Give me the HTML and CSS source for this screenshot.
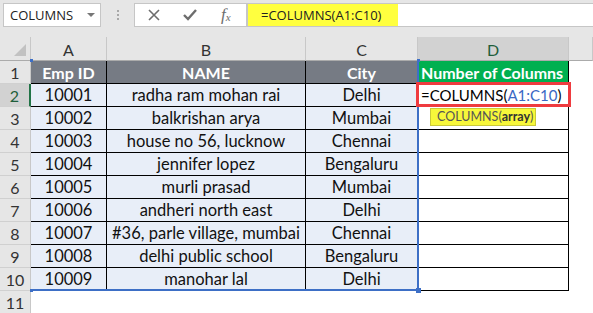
FILE: index.html
```html
<!DOCTYPE html>
<html lang="en">
<head>
    <meta charset="UTF-8">
    <title>COLUMNS function</title>
    <link rel="stylesheet" href="styles.css">
</head>
<body>

    <div class="toolbar">
        <div class="namebox">
            <span>COLUMNS</span>
            <span class="caret"></span>
        </div>
        <div class="dots"><i></i><i></i><i></i></div>
        <div class="fxbox">
            <svg class="icon" width="12" height="12" viewBox="0 0 12 12">
                <path d="M1 1 L11 11 M11 1 L1 11" stroke="#6d6d6d" stroke-width="1.6" fill="none"/>
            </svg>
            <svg class="icon" width="14" height="12" viewBox="0 0 14 12">
                <path d="M1 6 L5 10 L13 1" stroke="#6d6d6d" stroke-width="2.4" fill="none"/>
            </svg>
            <span class="fx">f<sub>x</sub></span>
        </div>
        <div class="formula">
            <span class="formula-text">=COLUMNS(A1:C10)</span>
        </div>
    </div>

    <div class="sheet">
        <div class="corner"><span class="tri"></span></div>
        <div class="colhead">A</div>
        <div class="colhead">B</div>
        <div class="colhead">C</div>
        <div class="colhead active">D</div>
        <div class="colhead"></div>

        <div class="rowhead">1</div>
        <div class="cell head">Emp ID</div>
        <div class="cell head">NAME</div>
        <div class="cell head">City</div>
        <div class="cell green">Number of Columns</div>
        <div class="blank"></div>

        <div class="rowhead active">2</div>
        <div class="cell data">10001</div>
        <div class="cell data">radha ram mohan rai</div>
        <div class="cell data">Delhi</div>
        <div class="cell left">=COLUMNS(<span class="ref">A1:C10</span>)</div>
        <div class="blank"></div>

        <div class="rowhead">3</div>
        <div class="cell data">10002</div>
        <div class="cell data">balkrishan arya</div>
        <div class="cell data">Mumbai</div>
        <div class="cell"></div>
        <div class="blank"></div>

        <div class="rowhead">4</div>
        <div class="cell data">10003</div>
        <div class="cell data">house no 56, lucknow</div>
        <div class="cell data">Chennai</div>
        <div class="cell"></div>
        <div class="blank"></div>

        <div class="rowhead">5</div>
        <div class="cell data">10004</div>
        <div class="cell data">jennifer lopez</div>
        <div class="cell data">Bengaluru</div>
        <div class="cell"></div>
        <div class="blank"></div>

        <div class="rowhead">6</div>
        <div class="cell data">10005</div>
        <div class="cell data">murli prasad</div>
        <div class="cell data">Mumbai</div>
        <div class="cell"></div>
        <div class="blank"></div>

        <div class="rowhead">7</div>
        <div class="cell data">10006</div>
        <div class="cell data">andheri north east</div>
        <div class="cell data">Delhi</div>
        <div class="cell"></div>
        <div class="blank"></div>

        <div class="rowhead">8</div>
        <div class="cell data">10007</div>
        <div class="cell data">#36, parle village, mumbai</div>
        <div class="cell data">Chennai</div>
        <div class="cell"></div>
        <div class="blank"></div>

        <div class="rowhead">9</div>
        <div class="cell data">10008</div>
        <div class="cell data">delhi public school</div>
        <div class="cell data">Bengaluru</div>
        <div class="cell"></div>
        <div class="blank"></div>

        <div class="rowhead">10</div>
        <div class="cell data">10009</div>
        <div class="cell data">manohar lal</div>
        <div class="cell data">Delhi</div>
        <div class="cell"></div>
        <div class="blank"></div>

        <div class="rowhead">11</div>
        <div class="blank"></div>
        <div class="blank"></div>
        <div class="blank"></div>
        <div class="blank"></div>
        <div class="blank"></div>

        <!-- overlays -->
        <div class="range">
            <span class="handle tl"></span>
            <span class="handle tr"></span>
            <span class="handle bl"></span>
            <span class="handle br"></span>
        </div>
        <div class="mark"></div>
        <div class="tip">COLUMNS(<b>array</b>)</div>
    </div>

</body>
</html>
```

FILE: styles.css
```css
body {
    margin: 0;
    width: 593px;
    height: 313px;
    overflow: hidden;
    background: #fff;
    font-family: Lato, "Noto Sans", sans-serif;
}

/* formula bar */
.toolbar {
    height: 37px;
    box-sizing: border-box;
    padding-top: 3px;
    background: #e6e6e6;
    display: flex;
    align-items: flex-start;
    font-family: "Open Sans", "Noto Sans", sans-serif;
    font-size: 13px;
    color: #222;
}
.namebox {
    margin-left: 3px;
    width: 98px;
    height: 24px;
    box-sizing: border-box;
    background: #fff;
    border: 1px solid #c6c6c6;
    display: flex;
    align-items: center;
    justify-content: space-between;
    padding: 0 5px 0 6px;
}
.caret {
    width: 0;
    height: 0;
    border-left: 4px solid transparent;
    border-right: 4px solid transparent;
    border-top: 4px solid #777;
}
.dots {
    width: 33px;
    height: 24px;
    display: flex;
    flex-direction: column;
    align-items: center;
    justify-content: center;
    gap: 2px;
}
.dots i {
    width: 2px;
    height: 2px;
    background: #a8a8a8;
}
.fxbox {
    width: 112px;
    height: 24px;
    box-sizing: border-box;
    background: #fff;
    border: 1px solid #c6c6c6;
    border-right: none;
    display: flex;
    align-items: center;
    padding-left: 13px;
    gap: 23px;
}
.fx {
    font-family: "Liberation Serif", serif;
    font-style: italic;
    font-size: 17px;
    color: #6d6d6d;
    margin-left: 1px;
}
.fx sub {
    font-size: 11px;
    vertical-align: -1px;
}
.formula {
    flex: 1;
    height: 24px;
    box-sizing: border-box;
    background: #fff;
    border: 1px solid #c6c6c6;
    border-right: none;
    display: flex;
}
.formula-text {
    width: 151px;
    box-sizing: border-box;
    background: #ffff3f;
    padding-left: 13px;
    line-height: 22px;
    border-left: 1px solid #c6c6c6;
}

/* grid */
.sheet {
    position: relative;
    display: grid;
    grid-template-columns: 31px 76px 199px 112px 151px 1fr;
    grid-template-rows: 24px;
    grid-auto-rows: 23px;
    font-size: 16px;
}
.corner,
.colhead,
.rowhead {
    background: #e6e6e6;
    color: #333;
    box-sizing: border-box;
    display: flex;
    align-items: center;
    justify-content: center;
}
.corner {
    border-right: 1px solid #c8c8c8;
    border-bottom: 1px solid #ababab;
    position: relative;
}
.tri {
    position: absolute;
    right: 4px;
    bottom: 4px;
    width: 0;
    height: 0;
    border-left: 12px solid transparent;
    border-bottom: 12px solid #c2c2c2;
}
.colhead {
    border-right: 1px solid #c8c8c8;
    border-bottom: 1px solid #ababab;
    padding-top: 1px;
}
.colhead.active {
    background: #d2d2d2;
    color: #1f5e3b;
}
.rowhead {
    border-right: 1px solid #c8c8c8;
    border-bottom: 1px solid #d0d0d0;
}
.rowhead.active {
    background: #d2d2d2;
    color: #1f5e3b;
    border-right: 2px solid #217346;
}
.cell {
    box-sizing: border-box;
    border-right: 1px solid #000;
    border-bottom: 1px solid #000;
    display: flex;
    align-items: center;
    justify-content: center;
    white-space: nowrap;
    color: #111;
}
.cell.head {
    background: #767b84;
    color: #fff;
    font-weight: bold;
}
.cell.green {
    background: #00b050;
    color: #fff;
    font-weight: bold;
    justify-content: flex-start;
    padding-left: 3px;
}
.cell.data {
    background: #e8eef8;
    font-size: 16.5px;
}
.cell.left {
    justify-content: flex-start;
    padding-left: 3px;
    color: #000;
    font-size: 15px;
}
.ref {
    color: #3a68c4;
}
.blank {
    background: #fff;
}

/* overlays */
.range {
    position: absolute;
    left: 31px;
    top: 23px;
    width: 388px;
    height: 231px;
    box-sizing: border-box;
    border-right: 2px solid #3d6fc6;
    border-bottom: 2px solid #3d6fc6;
}
.handle {
    position: absolute;
    width: 3px;
    height: 3px;
    background: #3d6fc6;
}
.handle.tl { left: -1px; top: -1px; }
.handle.tr { right: -3px; top: -1px; }
.handle.bl { left: -1px; bottom: -3px; }
.handle.br {
    right: -4px;
    bottom: -4px;
    width: 5px;
    height: 5px;
}
.mark {
    position: absolute;
    left: 416px;
    top: 45px;
    width: 155px;
    height: 25px;
    box-sizing: border-box;
    border: 3px solid #ef3b3f;
}
.tip {
    position: absolute;
    left: 430px;
    top: 71px;
    width: 106px;
    height: 18px;
    box-sizing: border-box;
    background: #f7f73a;
    border: 1px solid #c9c93a;
    font-size: 12.5px;
    line-height: 16px;
    color: #555;
    padding-left: 6px;
    white-space: nowrap;
}
.tip b {
    color: #333;
}
```
